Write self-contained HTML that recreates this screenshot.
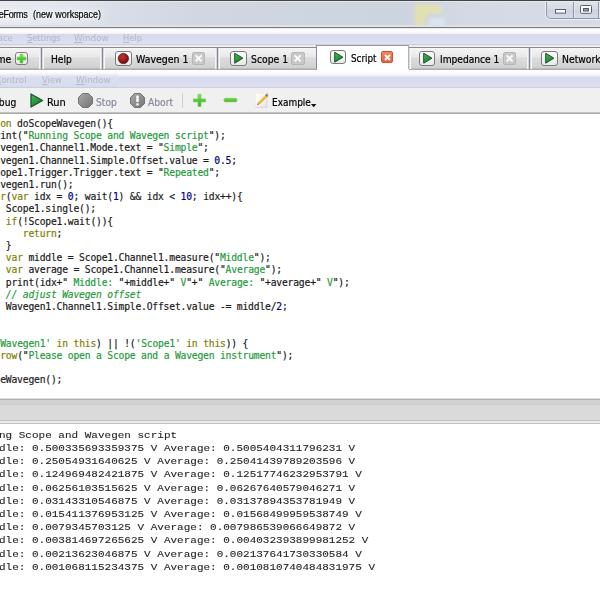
<!DOCTYPE html>
<html>
<head>
<meta charset="utf-8">
<title>WaveForms (new workspace)</title>
<style>
html,body{margin:0;padding:0;}
body{width:600px;height:600px;overflow:hidden;background:#fff;position:relative;font-family:"DejaVu Sans Condensed","Liberation Sans",sans-serif;}
.abs{position:absolute;}
#title{left:0;top:0;width:600px;height:28px;
 background:linear-gradient(to right,#e7ebf1 0,#e1e6ed 70px,#d8dee7 115px,#d0d7e1 200px,#ccd4de 400px,#d3dae3 470px,#d6dce5 600px);}
#title .top{z-index:3;left:0;top:0;width:600px;height:2px;background:linear-gradient(to bottom,#3e3e3e 0,#4a4a4a 1px,#e9edf2 1px,#e3e7ee 2px);}
#title .bot{left:0;top:25px;width:600px;height:3px;background:linear-gradient(to bottom,#d9dee6 0,#e1e5ea 1px,#dde1e6 1.7px,#9c9c9e 2px,#7c7c7c 2.2px,#808080 3px);}
#ttext{-webkit-text-stroke:.2px #000;right:498.9px;top:6.5px;font:11px/14px "Liberation Sans",sans-serif;color:#000;white-space:pre;transform:scaleX(.815);transform-origin:100% 50%;word-spacing:.35px;text-shadow:0 0 4px rgba(255,255,255,.95),0 0 7px rgba(255,255,255,.9),0 0 10px rgba(255,255,255,.7)}
#blob{left:400px;top:0;width:60px;height:28px;}
#wbtn{left:546px;top:1px;width:60px;height:18px;border:1px solid #8e97a4;border-top:none;border-radius:0 0 0 5px;box-sizing:border-box;
 background:linear-gradient(to bottom,#dde3eb 0,#d6dce6 46%,#cdd4df 52%,#d3dae4 100%);box-shadow:0 0 0 1px rgba(255,255,255,.55)}
.menubar{left:0;width:600px;}
#menu1{top:28px;height:19px;background:linear-gradient(to bottom,#dcdce0 0,#f4f4f7 .9px,#fdfdfe 1.6px,#fafafe 4.4px,#eef0fa 5.8px,#d6daed 6.4px,#d8dcee 10px,#dde1f2 15.6px,#c7cbdc 15.9px,#cacedf 16.6px,#eaeaee 17px,#eeeeef 19px);}
#menu2{top:70px;height:18px;background:linear-gradient(to bottom,#ffffff 0,#fcfcfe 3px,#f3f4fb 5px,#e6e8f6 6.2px,#d8dcee 7.4px,#d6daed 9px,#dde1f2 16.6px,#c6cadb 17px,#c9cdde 17.7px,#eeeeef 18px);}
#menu2 .mb{position:absolute;left:0;top:0;width:117.5px;height:18px;background:linear-gradient(to bottom,#ffffff 0,#fbfbfe 3px,#eceefa 4.5px,#e2e5f5 6px,#dadef1 7.5px,#d8dcf0 16.4px,#c8ccdc 17px,#cbcfdd 17.7px,#ededf0 18px);}
.mi{position:absolute;color:#b5b7c3;font-size:9.1px;line-height:12px;white-space:pre;transform:scaleX(1.023);transform-origin:0 50%}
.mi u{text-decoration:underline;text-underline-offset:1px}
#tabs{left:0;top:47px;width:600px;height:23px;}
.tab{position:absolute;top:0;height:23px;box-sizing:border-box;border-top:1px solid #8d8d8d;border-bottom:1px solid #adadad;border-right:1px solid #81879a;
 background:linear-gradient(to bottom,#fbfbfb 0,#f3f3f3 1px,#e9e9e9 8.5px,#dcdcdc 10px,#d1d1d1 19.8px,#cfcfcf 20px,#bcbcbc 20.2px,#bababa 21px);box-shadow:inset 1px 0 0 #d9dbe1,inset 2px 0 0 #f8f8f8,inset -1px 0 0 #d6d8df,inset -2px 0 0 #f4f4f4;}
.tab.active{top:-2px;height:24.4px;background:#fff;border-top:1px solid #9a9a9a;border-bottom:none;border-left:1px solid #858b9c;border-right:1px solid #b2b2b2;box-shadow:none;z-index:2}
.tl{-webkit-text-stroke:.22px #000;position:absolute;top:4.6px;font-size:11.25px;line-height:13px;color:#000;white-space:pre;transform:scaleX(.915);transform-origin:0 50%}
.ib{position:absolute;top:3px;width:16.6px;height:14.8px;border:1px solid #7c7c7c;border-radius:3px;box-sizing:border-box;background:linear-gradient(to bottom,#fdfdfd,#e9e9e9);}
.cb{position:absolute;top:4.2px;width:13.2px;height:12.6px;border-radius:2px;box-sizing:border-box;background:#c9c9c9;border:1px solid #b6b6b6;}
.cb.red{background:linear-gradient(to bottom,#ee8666,#e6623f);border-color:#d9502f}
.cb svg,.ib svg{position:absolute;left:0;top:0}
#tool{left:0;top:88px;width:600px;height:26px;background:linear-gradient(to bottom,#f0f0f0 0,#f0f0f0 23.8px,#c4c4c4 24.2px,#c0c0c0 25px,#a8a8a8 25px,#aaaaaa 26px);}
.tt{-webkit-text-stroke:.22px currentColor;position:absolute;top:95.7px;font-size:11.25px;line-height:13px;color:#000;white-space:pre;transform:scaleX(.905);transform-origin:0 50%}
.tt.dis{color:#878a9e}
#editor{left:0;top:114px;width:600px;height:285px;background:#fff;overflow:hidden}
#code{-webkit-text-stroke:.18px currentColor;position:absolute;left:-33.6px;top:118px;margin:0;letter-spacing:-0.198px;font:9.7px/12.21px "DejaVu Sans Mono","Liberation Mono",monospace;color:#1a1a1a;white-space:pre;}
#code .k{color:#808000}#code .s{color:#249a3a}#code .n{color:#000080}#code .c{color:#249a3a;font-style:italic}
#split{left:0;top:398px;width:600px;height:26px;background:linear-gradient(to bottom,#eef0f2 0,#d4d7da .7px,#b2b2b2 1px,#b2b2b2 2.1px,#d4d4d4 2.5px,#d6d6d6 3.4px,#c9c9c9 3.7px,#c9c9c9 4.1px,#d2d2d2 4.4px,#d2d2d2 6.2px,#cccccc 6.5px,#cccccc 6.9px,#dadada 7.3px,#dadada 21.6px,#c3c3c3 22px,#c3c3c3 23px,#e6e6e6 23.4px,#eeeeee 24.6px,#bdbdc4 25px,#bfbfc6 25.8px,#ffffff 26px);}
#out{position:absolute;left:-34px;top:429px;margin:0;font:11.24px/15px "Liberation Mono",monospace;color:#262626;-webkit-text-stroke:.12px #262626;white-space:pre;transform:scale(.9785,.8807);transform-origin:0 0}
</style>
</head>
<body>
<!-- title bar -->
<div id="title" class="abs">
  <svg id="blob" class="abs" viewBox="0 0 60 28"><defs><filter id="bl" x="-50%" y="-50%" width="200%" height="200%"><feGaussianBlur stdDeviation="1.7"/></filter></defs>
    <path d="M29 18 L45 18 L45 28 L28 28 Z" fill="#dfe7f4" filter="url(#bl)" opacity=".75"/>
    <path d="M15 4 L41 5 L42 13 L26 14 L25 28 L15 28 Z" fill="#e6e2aa" filter="url(#bl)" opacity=".85"/></svg>
  <div class="abs top"></div>
  <div class="abs bot"></div>
  <div id="ttext" class="abs"><span style="letter-spacing:-.35px">WaveForms</span>  (new workspace)</div>
  <div id="wbtn" class="abs"></div>
  <svg class="abs" style="left:546px;top:0" width="54" height="20" viewBox="0 0 54 20">
    <line x1="27.5" y1="1" x2="27.5" y2="18" stroke="#8e97a4"/><line x1="28.5" y1="1" x2="28.5" y2="18" stroke="#eef1f5" opacity=".7"/>
    <line x1="52.5" y1="1" x2="52.5" y2="18" stroke="#8e97a4"/><line x1="53.5" y1="1" x2="53.5" y2="18" stroke="#eef1f5" opacity=".7"/>
    <rect x="9.5" y="9.5" width="10" height="3.6" fill="#fff" stroke="#59606d"/>
    <rect x="34.5" y="5.5" width="11" height="7.8" rx="1" fill="#fff" stroke="#59606d"/>
    <rect x="37.5" y="8.5" width="5" height="2.5" fill="#9aa3b2" stroke="#535a66"/>
  </svg>
</div>

<!-- main menu -->
<div id="menu1" class="abs menubar">
  <span class="mi" style="right:587.6px;top:4.4px;transform-origin:100% 50%"><u>W</u>orkspace</span>
  <span class="mi" style="left:27px;top:4.4px;transform:scaleX(1.0)"><u>S</u>ettings</span>
  <span class="mi" style="left:74px;top:4.4px;transform:scaleX(1.077)"><u>W</u>indow</span>
  <span class="mi" style="left:122.8px;top:4.4px"><u>H</u>elp</span>
</div>

<!-- tabs -->
<div id="tabs" class="abs">
  <div class="tab" style="left:-40px;width:82px"><span class="tl" style="right:29.5px;transform-origin:100% 50%">Welcome</span>
    <span class="ib" style="left:54.6px;top:4.4px;width:13px;height:13px"><svg width="11" height="11" viewBox="0 0 11 11"><path d="M4.1 1.1h2.8v3h3v2.8h-3v3h-2.8v-3h-3v-2.8h3z" fill="url(#pg)" stroke="#6ccb4e" stroke-width=".7" stroke-linejoin="round"/></svg></span></div>
  <div class="tab" style="left:42px;width:61px"><span class="tl" style="left:8.9px;transform:scaleX(.9)">Help</span></div>
  <div class="tab" style="left:103px;width:115px"><span class="ib" style="left:12px"><svg width="15" height="13" viewBox="0 0 15 13"><defs><radialGradient id="rg" cx=".4" cy=".35" r=".7"><stop offset="0" stop-color="#b43a35"/><stop offset=".6" stop-color="#931a18"/><stop offset="1" stop-color="#6e0e0e"/></radialGradient></defs><circle cx="7.4" cy="6.5" r="5.2" fill="url(#rg)" stroke="#5e1010" stroke-width=".6"/></svg></span>
    <span class="tl" style="left:32.8px;transform:scaleX(.93)">Wavegen 1</span><span class="cb" style="left:88.6px"><svg width="11.2" height="10.6" viewBox="0 0 11.2 10.6"><path d="M2.6 2.3l6 6M8.6 2.3l-6 6" stroke="#fff" stroke-width="1.8"/></svg></span></div>
  <div class="tab" style="left:218px;width:99px;box-shadow:inset 1px 0 0 #d9dbe1,inset 2px 0 0 #f8f8f8"><span class="ib" style="left:12px"><svg width="14" height="12" viewBox="0 0 14 12"><path d="M3.7 1.2l8.2 5-8.2 5z" fill="url(#rgn)" stroke="#18572a" stroke-width="1" stroke-linejoin="round"/></svg></span>
    <span class="tl" style="left:32.9px">Scope 1</span><span class="cb" style="left:73.4px"><svg width="11.2" height="10.6" viewBox="0 0 11.2 10.6"><path d="M2.6 2.3l6 6M8.6 2.3l-6 6" stroke="#fff" stroke-width="1.8"/></svg></span></div>
  <div class="tab active" style="left:316px;width:93px"><span class="ib" style="left:12.8px;top:3.7px"><svg width="14" height="12" viewBox="0 0 14 12"><path d="M3.7 1.2l8.2 5-8.2 5z" fill="url(#rgn)" stroke="#18572a" stroke-width="1" stroke-linejoin="round"/></svg></span>
    <span class="tl" style="left:33.6px;top:5.6px;transform:scaleX(.87)">Script</span><span class="cb red" style="left:63.6px;top:4.7px;width:12.8px;height:12.8px"><svg width="11" height="11" viewBox="0 0 11 11"><path d="M3 3l5 5M8 3l-5 5" stroke="#fff" stroke-width="1.9"/></svg></span></div>
  <div class="tab" style="left:409px;width:121px"><span class="ib" style="left:9.8px"><svg width="14" height="12" viewBox="0 0 14 12"><path d="M3.7 1.2l8.2 5-8.2 5z" fill="url(#rgn)" stroke="#18572a" stroke-width="1" stroke-linejoin="round"/></svg></span>
    <span class="tl" style="left:31.3px;transform:scaleX(.9)">Impedance 1</span><span class="cb" style="left:93.5px"><svg width="11.2" height="10.6" viewBox="0 0 11.2 10.6"><path d="M2.6 2.3l6 6M8.6 2.3l-6 6" stroke="#fff" stroke-width="1.8"/></svg></span></div>
  <div class="tab" style="left:530px;width:110px"><span class="ib" style="left:11.3px"><svg width="14" height="12" viewBox="0 0 14 12"><path d="M3.7 1.2l8.2 5-8.2 5z" fill="url(#rgn)" stroke="#18572a" stroke-width="1" stroke-linejoin="round"/></svg></span>
    <span class="tl" style="left:31.8px">Network 1</span></div>
</div>

<!-- script window menu -->
<div id="menu2" class="abs menubar"><div class="mb"></div>
  <span class="mi" style="right:573.3px;top:4.4px;transform-origin:100% 50%;transform:scaleX(1.06)"><u>C</u>ontrol</span>
  <span class="mi" style="left:42.3px;top:4.4px"><u>V</u>iew</span>
  <span class="mi" style="left:76px;top:4.4px;transform:scaleX(1.077)"><u>W</u>indow</span>
</div>

<!-- toolbar -->
<div id="tool" class="abs"></div>
<span class="tt" style="right:583.4px;transform-origin:100% 50%">Debug</span>
<svg class="abs" style="left:29px;top:92px" width="16" height="17" viewBox="0 0 16 17"><defs><linearGradient id="rgn" x1="0" y1="0" x2=".6" y2="1"><stop offset="0" stop-color="#4fb95e"/><stop offset=".55" stop-color="#2c9a3d"/><stop offset="1" stop-color="#1f7a2e"/></linearGradient></defs><path d="M2 2l11.6 6.5-11.6 6.5z" fill="url(#rgn)" stroke="#18572a" stroke-width="1.3" stroke-linejoin="round"/></svg>
<span class="tt" style="left:46.6px;transform:scaleX(.97)">Run</span>
<svg class="abs" style="left:77px;top:92px" width="17" height="17" viewBox="0 0 17 17"><defs><linearGradient id="gg" x1="0" y1="0" x2="1" y2="1"><stop offset="0" stop-color="#a9a9a9"/><stop offset="1" stop-color="#747474"/></linearGradient></defs><path d="M5.5 1.5h6l4 4v6l-4 4h-6l-4-4v-6z" fill="url(#gg)" stroke="#6a6a6a" stroke-width=".9"/></svg>
<span class="tt dis" style="left:95.8px">Stop</span>
<svg class="abs" style="left:129px;top:92px" width="17" height="17" viewBox="0 0 17 17"><path d="M5.5 1.5h6l4 4v6l-4 4h-6l-4-4v-6z" fill="url(#gg)" stroke="#6a6a6a" stroke-width=".9"/><rect x="7.3" y="3.6" width="2.4" height="6.4" rx=".6" fill="#fff"/><rect x="7.3" y="11.2" width="2.4" height="2.3" rx=".6" fill="#fff"/></svg>
<span class="tt dis" style="left:148px">Abort</span>
<div class="abs" style="left:182px;top:93px;width:1px;height:15px;background:#cfcfcf"></div>
<svg class="abs" style="left:191px;top:92px" width="17" height="17" viewBox="0 0 17 17"><defs><linearGradient id="pg" x1="0" y1="0" x2="0" y2="1"><stop offset="0" stop-color="#86df60"/><stop offset=".5" stop-color="#55c836"/><stop offset="1" stop-color="#3dab22"/></linearGradient></defs><path d="M7 2.3h3v4.6h4.6v3h-4.6v4.6h-3v-4.6h-4.6v-3h4.6z" fill="url(#pg)" stroke="#7fd162" stroke-width=".8" stroke-linejoin="round"/></svg>
<svg class="abs" style="left:222px;top:92px" width="17" height="17" viewBox="0 0 17 17"><rect x="2.2" y="6.4" width="12.6" height="3.4" rx="1" fill="url(#pg)" stroke="#6cc94d" stroke-width=".9"/></svg>
<svg class="abs" style="left:253px;top:92px" width="18" height="17" viewBox="0 0 18 17"><defs><linearGradient id="pp" x1="0" y1="0" x2="1" y2="1"><stop offset="0" stop-color="#ffffff"/><stop offset=".5" stop-color="#f6f6f6"/><stop offset="1" stop-color="#e4e4e4"/></linearGradient></defs><rect x="2" y="1.2" width="11.8" height="14" fill="url(#pp)"/><path d="M2 15.3h11.9v-14" fill="none" stroke="#cfcfcf" stroke-width=".8"/><path d="M2.2 15.2v-14h11.6" fill="none" stroke="#e6e6e6" stroke-width=".6"/><path d="M5.6 11.4L13.6 3.4" stroke="#f2c233" stroke-width="2.3"/><path d="M6.3 12.1L14.3 4.1" stroke="#d9961f" stroke-width=".8"/><path d="M4.1 13l.7-2.4 1.7 1.7z" fill="#b58a5a"/><path d="M4.1 13l.3-1 .7.7z" fill="#444"/><path d="M13.2 3.8L14.2 2.8" stroke="#5a5a5a" stroke-width="2.4"/><path d="M14.1 2.9L15.1 1.9" stroke="#f0a596" stroke-width="2.2"/></svg>
<span class="tt" style="left:271.8px;transform:scaleX(.885)">Example</span>
<svg class="abs" style="left:311px;top:104px" width="6" height="4" viewBox="0 0 6 4"><path d="M0 0h5.4l-2.7 3.2z" fill="#111"/></svg>

<!-- editor -->
<div id="editor" class="abs"></div>
<pre id="code"><span class="k">function</span> doScopeWavegen(){
    print("<span class="s">Running Scope and Wavegen script</span>");
    Wavegen1.Channel1.Mode.text = "<span class="s">Simple</span>";
    Wavegen1.Channel1.Simple.Offset.value = <span class="n">0.5</span>;
    Scope1.Trigger.Trigger.text = "<span class="s">Repeated</span>";
    Wavegen1.run();
    <span class="k">for</span>(<span class="k">var</span> idx = <span class="n">0</span>; wait(<span class="n">1</span>) &amp;&amp; idx &lt; <span class="n">10</span>; idx++){
       Scope1.single();
       <span class="k">if</span>(!Scope1.wait()){
          <span class="k">return</span>;
       }
       <span class="k">var</span> middle = Scope1.Channel1.measure("<span class="s">Middle</span>");
       <span class="k">var</span> average = Scope1.Channel1.measure("<span class="s">Average</span>");
       print(idx+"<span class="s"> Middle: </span>"+middle+"<span class="s"> V</span>"+"<span class="s"> Average: </span>"+average+"<span class="s"> V</span>");
       <span class="c">// adjust Wavegen offset</span>
       Wavegen1.Channel1.Simple.Offset.value -= middle/<span class="n">2</span>;
    }
}
<span class="k">if</span>(!(<span class="s">'Wavegen1'</span> <span class="k">in</span> <span class="k">this</span>) || !(<span class="s">'Scope1'</span> <span class="k">in</span> <span class="k">this</span>)) {
    <span class="k">throw</span>("<span class="s">Please open a Scope and a Wavegen instrument</span>");
}
doScopeWavegen();</pre>

<!-- splitter -->
<div id="split" class="abs"></div>

<!-- output -->
<pre id="out">Running Scope and Wavegen script
0 Middle: 0.500335693359375 V Average: 0.5005404311796231 V
1 Middle: 0.25054931640625 V Average: 0.25041439789203596 V
2 Middle: 0.124969482421875 V Average: 0.12517746232953791 V
3 Middle: 0.06256103515625 V Average: 0.06267640579046271 V
4 Middle: 0.03143310546875 V Average: 0.03137894353781949 V
5 Middle: 0.015411376953125 V Average: 0.01568499959538749 V
6 Middle: 0.0079345703125 V Average: 0.007986539066649872 V
7 Middle: 0.003814697265625 V Average: 0.004032393899981252 V
8 Middle: 0.00213623046875 V Average: 0.002137641730330584 V
9 Middle: 0.001068115234375 V Average: 0.0010810740484831975 V</pre>
</body>
</html>
